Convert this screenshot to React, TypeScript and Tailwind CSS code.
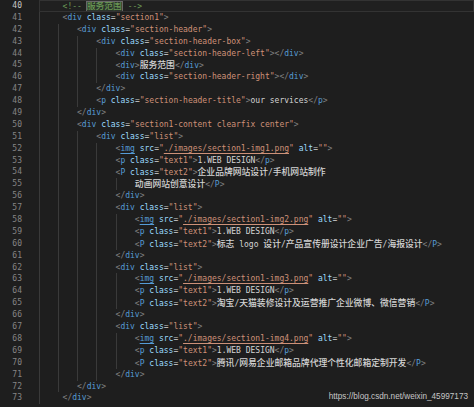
import React from "react";

type Kind = "punct" | "tag" | "attr" | "eq" | "str" | "text" | "comment";
type Tok = { t: string; k: Kind; u?: boolean };

const COLORS: Record<Kind, string> = {
    punct: "text-[#808080]",
    tag: "text-[#569cd6]",
    attr: "text-[#9cdcfe]",
    eq: "text-[#d4d4d4]",
    str: "text-[#ce9178]",
    text: "text-[#d4d4d4]",
    comment: "text-[#6a9955]",
};

// [indent column, source]
const LINES: [number, string][] = [
    [5, '<!-- 服务范围 -->'],
    [5, '<div class="section1">'],
    [8, '<div class="section-header">'],
    [12, '<div class="section-header-box">'],
    [16, '<div class="section-header-left"></div>'],
    [16, '<div>服务范围</div>'],
    [16, '<div class="section-header-right"></div>'],
    [12, '</div>'],
    [12, '<p class="section-header-title">our services</p>'],
    [8, '</div>'],
    [8, '<div class="section1-content clearfix center">'],
    [12, '<div class="list">'],
    [16, '<img src="./images/section1-img1.png" alt="">'],
    [16, '<p class="text1">1.WEB DESIGN</p>'],
    [16, '<P class="text2">企业品牌网站设计/手机网站制作'],
    [20, '动画网站创意设计</P>'],
    [16, '</div>'],
    [16, '<div class="list">'],
    [20, '<img src="./images/section1-img2.png" alt="">'],
    [20, '<p class="text1">1.WEB DESIGN</p>'],
    [20, '<P class="text2">标志 logo 设计/产品宣传册设计企业广告/海报设计</P>'],
    [16, '</div>'],
    [16, '<div class="list">'],
    [20, '<img src="./images/section1-img3.png" alt="">'],
    [20, '<p class="text1">1.WEB DESIGN</p>'],
    [20, '<P class="text2">淘宝/天猫装修设计及运营推广企业微博、微信营销</P>'],
    [16, '</div>'],
    [16, '<div class="list">'],
    [20, '<img src="./images/section1-img4.png" alt="">'],
    [20, '<p class="text1">1.WEB DESIGN</p>'],
    [20, '<P class="text2">腾讯/网易企业邮箱品牌代理个性化邮箱定制开发</P>'],
    [16, '</div>'],
    [8, '</div>'],
    [5, '</div>'],
];

function tokenize(s: string): Tok[] {
    const out: Tok[] = [];
    let i = 0;
    while (i < s.length) {
        if (s[i] === "<") {
            const close = s[i + 1] === "/";
            out.push({ t: close ? "</" : "<", k: "punct" });
            i += close ? 2 : 1;
            const name = /^[A-Za-z0-9]+/.exec(s.slice(i))?.[0] ?? "";
            out.push({ t: name, k: "tag", u: name === "img" });
            i += name.length;
            while (i < s.length && s[i] !== ">") {
                const rest = s.slice(i);
                const ws = /^\s+/.exec(rest);
                if (ws) {
                    out.push({ t: ws[0], k: "text" });
                    i += ws[0].length;
                    continue;
                }
                const attr = /^([\w-]+)="([^"]*)"/.exec(rest);
                if (attr) {
                    out.push({ t: attr[1], k: "attr" });
                    out.push({ t: "=", k: "eq" });
                    out.push({ t: '"', k: "str" });
                    out.push({ t: attr[2], k: "str", u: attr[1] === "src" });
                    out.push({ t: '"', k: "str" });
                    i += attr[0].length;
                    continue;
                }
                out.push({ t: s[i], k: "text" });
                i++;
            }
            if (s[i] === ">") {
                out.push({ t: ">", k: "punct" });
                i++;
            }
        } else {
            const next = s.indexOf("<", i);
            const end = next === -1 ? s.length : next;
            out.push({ t: s.slice(i, end), k: "text" });
            i = end;
        }
    }
    return out;
}

// CJK runs get a wider font so they sit like the editor's fallback glyphs
function Run({ text }: { text: string }) {
    const parts = text.split(/([\u3000-\u9fff\uff00-\uffef]+)/);
    return (
        <>
            {parts.map((p, i) =>
                /[\u3000-\u9fff\uff00-\uffef]/.test(p) ? (
                    <span key={i} className="font-['Noto_Sans_CJK_SC',sans-serif] text-[8.8px] font-medium">
                        {p}
                    </span>
                ) : (
                    <React.Fragment key={i}>{p}</React.Fragment>
                )
            )}
        </>
    );
}

function CodeText({ src }: { src: string }) {
    return (
        <>
            {tokenize(src).map((tok, i) => (
                <span
                    key={i}
                    className={`${COLORS[tok.k]} ${tok.u ? "underline decoration-1 underline-offset-[1.5px]" : ""}`}
                >
                    <Run text={tok.t} />
                </span>
            ))}
        </>
    );
}

function CommentLine() {
    return (
        <span className={COLORS.comment}>
            {"<!-- "}
            <span className="bg-[#2c352c] outline outline-1 outline-[#686868]">
                <Run text="服务范围" />
            </span>
            <span className="inline-block w-px h-[10px] align-[-2px] bg-[#d0d0d0]" />
            {" -->"}
        </span>
    );
}

export default function App() {
    return (
        <div className="relative w-[474px] h-[407px] overflow-hidden bg-[#1e1e1e] font-['DejaVu_Sans_Mono','Noto_Sans_CJK_SC',monospace] text-[8px]">
            <div className="flex flex-col">
                {LINES.map(([col, src], idx) => {
                    const n = 40 + idx;
                    const active = n === 40;
                    const guides = Math.floor(col / 4);
                    const pad = " ".repeat(col % 4);
                    return (
                        <div key={n} className="flex h-[11.9px] items-stretch">
                            <div
                                className={`w-[38.5px] shrink-0 pr-[16.5px] text-right leading-[11.9px] ${
                                    active ? "text-[#c6c6c6]" : "text-[#858585]"
                                }`}
                            >
                                {n}
                            </div>
                            <div
                                className={`flex flex-1 items-stretch ${
                                    active ? "bg-[#202020] outline outline-1 -outline-offset-1 outline-[#333333]" : ""
                                }`}
                            >
                                {Array.from({ length: guides }).map((_, g) => (
                                    <span key={g} className="w-[4ch] shrink-0 border-l border-[#3a3a3a]" />
                                ))}
                                <span className="whitespace-pre leading-[11.9px]">
                                    {pad}
                                    {active ? <CommentLine /> : <CodeText src={src} />}
                                </span>
                            </div>
                        </div>
                    );
                })}
            </div>

            <div className="absolute right-[6px] bottom-[4px] font-['Liberation_Sans',sans-serif] text-[8.2px] text-white/75">
                https://blog.csdn.net/weixin_45997173
            </div>
        </div>
    );
}
